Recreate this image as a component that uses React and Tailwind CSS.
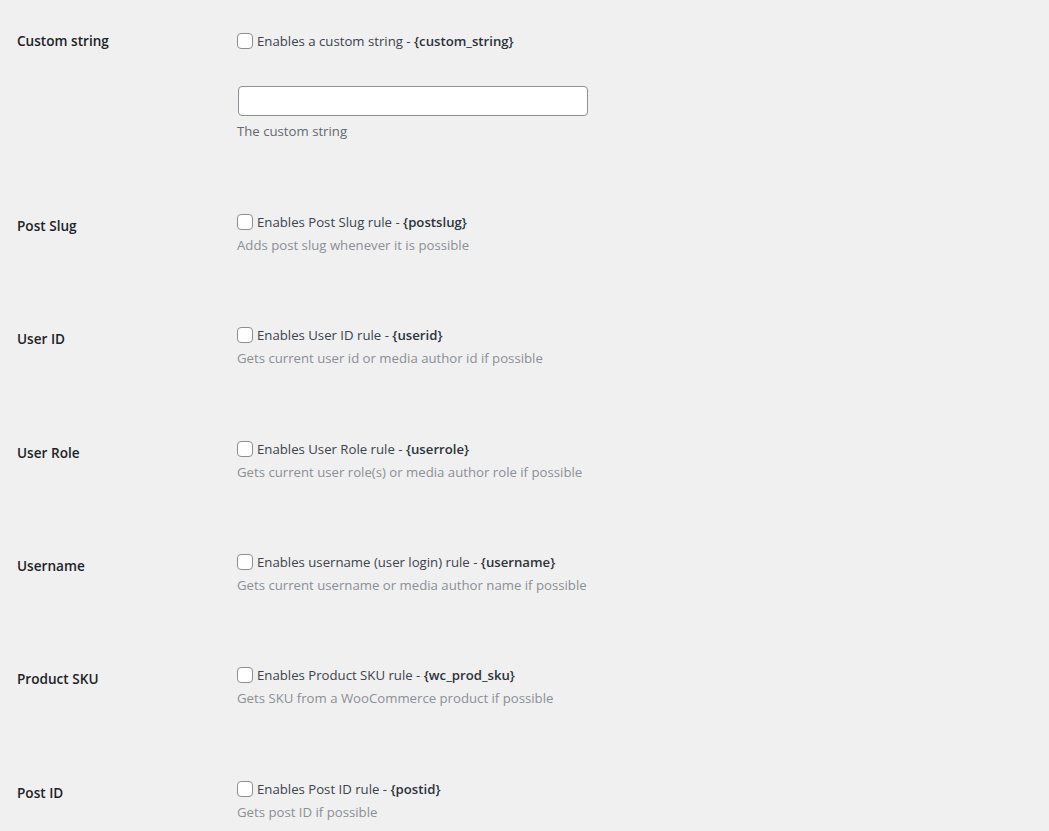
import React from "react";

const rows = [
  { label: "Post Slug", text: "Enables Post Slug rule - ", code: "{postslug}", desc: "Adds post slug whenever it is possible", h: "h-[113px]" },
  { label: "User ID", text: "Enables User ID rule - ", code: "{userid}", desc: "Gets current user id or media author id if possible", h: "h-[114px]" },
  { label: "User Role", text: "Enables User Role rule - ", code: "{userrole}", desc: "Gets current user role(s) or media author role if possible", h: "h-[113px]" },
  { label: "Username", text: "Enables username (user login) rule - ", code: "{username}", desc: "Gets current username or media author name if possible", h: "h-[113px]" },
  { label: "Product SKU", text: "Enables Product SKU rule - ", code: "{wc_prod_sku}", desc: "Gets SKU from a WooCommerce product if possible", h: "h-[114px]" },
  { label: "Post ID", text: "Enables Post ID rule - ", code: "{postid}", desc: "Gets post ID if possible", h: "h-[113px]" },
];

function Check({ text, code }) {
  return (
    <label className="flex items-center h-[18px] text-[#3c434a]">
      <span className="w-[16px] h-[16px] rounded-[4px] border border-[#8c8f94] bg-white shrink-0" />
      <span className="ml-[4px] whitespace-nowrap">
        {text}
        <span className="font-semibold text-[#2c3338]">{code}</span>
      </span>
    </label>
  );
}

export default function App() {
  return (
    <div
      className="h-screen overflow-hidden bg-[#f0f0f1] pl-[17px] text-[13.2px] leading-[18px]"
      style={{ fontFamily: '"Open Sans", "Noto Sans", Arial, sans-serif' }}
    >
      <div className="flex h-[197px]">
        <div className="w-[220px] pt-[32px] text-[13.6px] font-semibold text-[#1d2327]">Custom string</div>
        <div className="pt-[32px] flex flex-col">
          <Check text="Enables a custom string - " code="{custom_string}" />
          <input
            type="text"
            className="mt-[36px] ml-[1px] w-[350px] h-[30px] rounded-[4px] border border-[#8c8f94] bg-white outline-none"
          />
          <p className="mt-[6px] text-[#646970]">The custom string</p>
        </div>
      </div>
      {rows.map((r) => (
        <div key={r.label} className={`flex ${r.h}`}>
          <div className="w-[220px] pt-[20px] text-[13.6px] font-semibold text-[#1d2327]">{r.label}</div>
          <div className="pt-[15.5px] flex flex-col">
            <Check text={r.text} code={r.code} />
            <p className="mt-[5px] text-[#8c8f94]">{r.desc}</p>
          </div>
        </div>
      ))}
    </div>
  );
}
